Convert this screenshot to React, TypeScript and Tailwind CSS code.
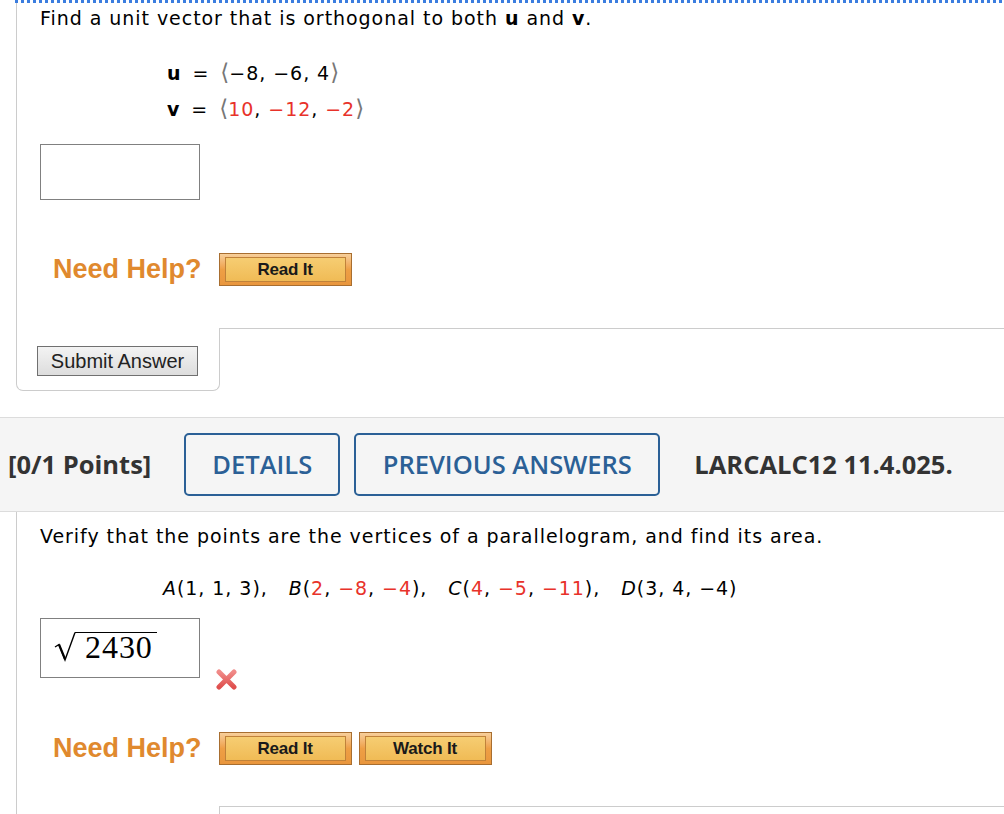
const red = 'text-[#e8322a]';

function OrangeButton({ label }: { label: string }) {
  return (
    <button className="w-[133px] h-[33px] border border-[#a86e30] bg-gradient-to-b from-[#f7cf9a] via-[#ee9f45] to-[#e9963d] px-[5px] py-[3px]">
      <span className="flex h-full items-center justify-center border border-[#c0823a] bg-gradient-to-b from-[#f6cd72] to-[#f0bb55] text-[17px] font-bold leading-none text-[#1a1a1a] font-['Liberation_Sans',sans-serif] tracking-[-0.2px]">
        {label}
      </span>
    </button>
  );
}

function NeedHelp({ watch }: { watch?: boolean }) {
  return (
    <div className="flex items-center h-[33px] ml-[13px] tracking-normal">
      <span className="text-[27px] font-bold text-[#e0892e] font-['Liberation_Sans',sans-serif] mr-[17px] leading-none">
        Need Help?
      </span>
      <OrangeButton label="Read It" />
      {watch && (
        <div className="ml-[7px]">
          <OrangeButton label="Watch It" />
        </div>
      )}
    </div>
  );
}

function Tab({ children }: { children?: React.ReactNode }) {
  return (
    <div className="flex ml-[16px]">
      <div className="w-[204px] h-[63px] border-l border-r border-b border-[#cccccc] rounded-b-[7px] pl-[20px] pt-[18px]">
        {children}
      </div>
      <div className="flex-1 border-t border-[#cccccc]" />
    </div>
  );
}

function Br({ c }: { c: string }) {
  return <span className="text-[23px] leading-none text-[#777] tracking-normal">{c}</span>;
}

function Gap() {
  return <span className="inline-block w-[7px]" />;
}

function RedX() {
  return (
    <svg width="23" height="21" viewBox="0 0 23 21">
      <defs>
        <linearGradient id="xg" x1="0" y1="0" x2="0" y2="1">
          <stop offset="0" stopColor="#f08a88" />
          <stop offset="1" stopColor="#df4f4d" />
        </linearGradient>
      </defs>
      <path d="M4 3 L19 18 M19 3 L4 18" stroke="url(#xg)" strokeWidth="5" strokeLinecap="round" />
    </svg>
  );
}

function Sqrt() {
  return (
    <div className="flex items-start pt-[13px] pl-[13px]">
      <svg width="22" height="30" viewBox="0 0 22 30">
        <path d="M1 15 L5 12.5 L11 28 L21 0.5" fill="none" stroke="#000" strokeWidth="1.4" />
        <path d="M5 12.5 L11 27" stroke="#000" strokeWidth="2.2" />
      </svg>
      <span className="border-t-[1.5px] border-black text-[32px] leading-[29px] font-['Liberation_Serif',serif] pl-[10px] pr-[4px] -ml-[1px] h-[30px]">
        2430
      </span>
    </div>
  );
}

export default function App() {
  return (
    <div className="w-[1004px] h-[814px] overflow-hidden bg-white text-black font-['DejaVu_Sans',sans-serif] text-[19px] tracking-[0.95px]">
      <div className="ml-[15px] h-[3px] bg-[repeating-linear-gradient(90deg,#3b7ddf_0px,#3b7ddf_3px,transparent_3px,transparent_6px)]" />

      {/* question 1 */}
      <div className="ml-[16px] border-l border-[#cccccc] pl-[23px] pt-[4px] h-[325px]">
        <p className="leading-[23px]">
          Find a unit vector that is orthogonal to both <b>u</b> and <b>v</b>.
        </p>
        <div className="mt-[25px] ml-[127px] leading-[36px]">
          <div>
            <b>u</b>
            <span className="mx-[11px]">=</span>
            <Br c="⟨" />−8, −6, 4<Br c="⟩" />
          </div>
          <div>
            <b>v</b>
            <span className="mx-[11px]">=</span>
            <Br c="⟨" />
            <span className={red}>10</span>, <span className={red}>−12</span>, <span className={red}>−2</span>
            <Br c="⟩" />
          </div>
        </div>
        <div className="mt-[17px] w-[160px] h-[56px] border border-[#808080]" />
        <div className="mt-[53px]">
          <NeedHelp />
        </div>
      </div>
      <Tab>
        <button className="w-[161px] h-[30px] border border-[#707070] bg-gradient-to-b from-[#f3f3f3] to-[#dddddd] text-[20px] leading-none text-[#222] tracking-normal font-['Liberation_Sans',sans-serif]">
          Submit Answer
        </button>
      </Tab>

      {/* points bar */}
      <div className="mt-[26px] h-[95px] border-y border-[#dcdcdc] bg-[#f5f5f5] flex items-center pl-[8px] tracking-normal font-['Open_Sans',sans-serif]">
        <span className="text-[25.5px] font-bold text-[#333]">[0/1 Points]</span>
        <button className="ml-[33px] w-[156px] h-[63px] border-2 border-[#2b6096] rounded-[5px] text-[25.5px] font-semibold text-[#2b6096]">
          DETAILS
        </button>
        <button className="ml-[14px] w-[306px] h-[63px] border-2 border-[#2b6096] rounded-[5px] text-[25.5px] font-semibold text-[#2b6096]">
          PREVIOUS ANSWERS
        </button>
        <span className="ml-[34px] text-[25.5px] font-bold text-[#333]">LARCALC12 11.4.025.</span>
      </div>

      {/* question 2 */}
      <div className="ml-[16px] border-l border-[#cccccc] pl-[23px] pt-[13px] h-[294px]">
        <p className="leading-[23px]">Verify that the points are the vertices of a parallelogram, and find its area.</p>
        <div className="mt-[22px] ml-[123px] leading-[36px] whitespace-pre">
          <i>A</i>(1, 1, 3),  <Gap />
          <i>B</i>(<span className={red}>2</span>, <span className={red}>−8</span>,{' '}
          <span className={red}>−4</span>),  <Gap />
          <i>C</i>(<span className={red}>4</span>, <span className={red}>−5</span>,{' '}
          <span className={red}>−11</span>),  <Gap />
          <i>D</i>(3, 4, −4)
        </div>
        <div className="mt-[12px] flex items-start">
          <div className="w-[160px] h-[60px] border border-[#808080]">
            <Sqrt />
          </div>
          <div className="ml-[15px] mt-[51px]">
            <RedX />
          </div>
        </div>
        <div className="mt-[42px]">
          <NeedHelp watch />
        </div>
      </div>
      <Tab />
    </div>
  );
}
